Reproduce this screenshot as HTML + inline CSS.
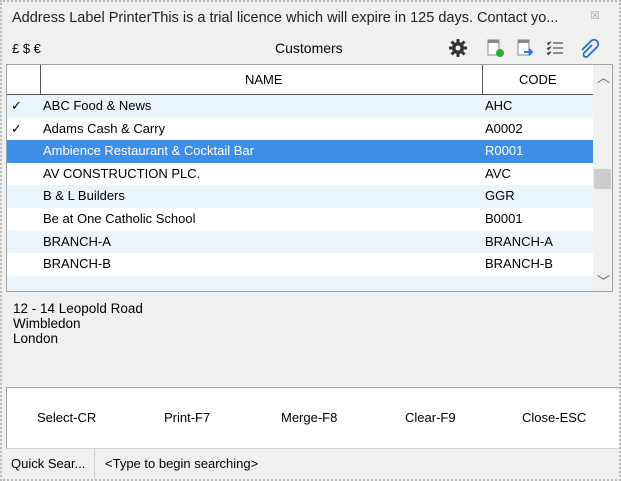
<!DOCTYPE html><html><head><style>
*{margin:0;padding:0;box-sizing:border-box}
body{width:621px;height:481px;background:#f0f0f0;font-family:"Liberation Sans",sans-serif;font-size:13px;color:#000;position:relative;overflow:hidden}
.frame{position:absolute;left:0;top:0;width:621px;height:481px;border:2px dotted #b8b8b8}
.t{position:absolute;white-space:nowrap}
.grid{position:absolute;left:6px;top:64px;width:607px;height:228px;border:1px solid #a0a0a0;background:#fff;overflow:hidden}
.hdr{position:absolute;left:0;top:0;width:588px;height:30px;background:#fff;border-bottom:1px solid #555}
.row{position:absolute;left:0;width:588px;height:22.6px;line-height:22px}
.sb{position:absolute;right:0;top:0;width:19px;height:100%;background:#f0f0f0}
</style></head><body>
<div class="t" style="left:12px;top:10px;font-size:14.5px;color:#222">Address Label PrinterThis is a trial licence which will expire in 125 days. Contact yo...</div>
<div class="t" style="left:590px;top:9px;color:#aaa;font-size:11px">☒</div>
<div class="t" style="left:12px;top:41px">£ $ €</div>
<div class="t" style="left:275px;top:40px;font-size:14px">Customers</div>
<svg class="t" style="left:448px;top:38px" width="170" height="20">
<g transform="translate(10,10)" fill="#333"><circle r="6"/><g stroke="#333" stroke-width="3"><line x1="0" y1="-9" x2="0" y2="9"/><line x1="-9" y1="0" x2="9" y2="0"/><line x1="-6.5" y1="-6.5" x2="6.5" y2="6.5"/><line x1="-6.5" y1="6.5" x2="6.5" y2="-6.5"/></g><circle r="2.5" fill="#f0f0f0"/></g>
<rect x="40" y="2" width="11" height="15" fill="#fff" stroke="#888"/><rect x="40" y="2" width="11" height="3" fill="#888"/><circle cx="52" cy="15" r="4" fill="#3a3"/>
<rect x="70" y="2" width="11" height="15" fill="#fff" stroke="#888"/><rect x="70" y="2" width="11" height="3" fill="#888"/><path d="M76 14h8M81 11l3 3-3 3" stroke="#2a7ad0" stroke-width="2" fill="none"/>
<g stroke="#555" stroke-width="1.3"><path d="M105 5h10M105 10h10M105 15h10"/><path d="M99 5l1.5 1.5 2.5-3M99 10l1.5 1.5 2.5-3M99 15l1.5 1.5 2.5-3"/></g>
<path d="M144 7l-8 8a2.5 2.5 0 0 0 4 3l9-9a4 4 0 0 0-6-6l-9 9" stroke="#2a6fc9" stroke-width="1.8" fill="none"/>
</svg>
<div class="grid">
<div class="hdr"><div style="position:absolute;left:33px;top:0;width:1px;height:30px;background:#555"></div><div style="position:absolute;left:475px;top:0;width:1px;height:30px;background:#555"></div>
<div class="t" style="left:238px;top:7px">NAME</div><div class="t" style="left:512px;top:7px">CODE</div></div>
<div class="row" style="top:30px;background:#eaf4fd"><span class="t" style="left:4px">✓</span><span class="t" style="left:36px">ABC Food &amp; News</span><span class="t" style="left:478px">AHC</span></div>
<div class="row" style="top:52.6px"><span class="t" style="left:4px">✓</span><span class="t" style="left:36px">Adams Cash &amp; Carry</span><span class="t" style="left:478px">A0002</span></div>
<div class="row" style="top:75.2px;background:#3d8ee6;color:#fff"><span class="t" style="left:36px">Ambience Restaurant &amp; Cocktail Bar</span><span class="t" style="left:478px">R0001</span></div>
<div class="row" style="top:97.8px"><span class="t" style="left:36px">AV CONSTRUCTION PLC.</span><span class="t" style="left:478px">AVC</span></div>
<div class="row" style="top:120.4px;background:#eaf4fd"><span class="t" style="left:36px">B &amp; L Builders</span><span class="t" style="left:478px">GGR</span></div>
<div class="row" style="top:143px"><span class="t" style="left:36px">Be at One Catholic School</span><span class="t" style="left:478px">B0001</span></div>
<div class="row" style="top:165.6px;background:#eaf4fd"><span class="t" style="left:36px">BRANCH-A</span><span class="t" style="left:478px">BRANCH-A</span></div>
<div class="row" style="top:188.2px"><span class="t" style="left:36px">BRANCH-B</span><span class="t" style="left:478px">BRANCH-B</span></div>
<div class="row" style="top:210.8px;background:#eaf4fd"></div>
<div class="sb"><div class="t" style="left:4px;top:2px;color:#666">︿</div><div style="position:absolute;left:1px;top:104px;width:17px;height:20px;background:#cdcdcd"></div><div class="t" style="left:4px;top:206px;color:#666">﹀</div></div>
</div>
<div class="t" style="left:13px;top:301px;line-height:15px;font-size:13.5px">12 - 14 Leopold Road<br>Wimbledon<br>London</div>
<div style="position:absolute;left:6px;top:387px;width:613px;height:61px;background:#fff;border-top:1px solid #a0a0a0;border-left:1px solid #a0a0a0"></div>
<div class="t" style="left:37px;top:410px">Select-CR</div>
<div class="t" style="left:164px;top:410px">Print-F7</div>
<div class="t" style="left:281px;top:410px">Merge-F8</div>
<div class="t" style="left:405px;top:410px">Clear-F9</div>
<div class="t" style="left:522px;top:410px">Close-ESC</div>
<div style="position:absolute;left:6px;top:448px;width:613px;height:1px;background:#d0d0d0"></div>
<div style="position:absolute;left:94px;top:449px;width:1px;height:30px;background:#d0d0d0"></div>
<div class="t" style="left:11px;top:456px">Quick Sear...</div>
<div class="t" style="left:105px;top:456px">&lt;Type to begin searching&gt;</div>
<div class="frame"></div>
</body></html>
